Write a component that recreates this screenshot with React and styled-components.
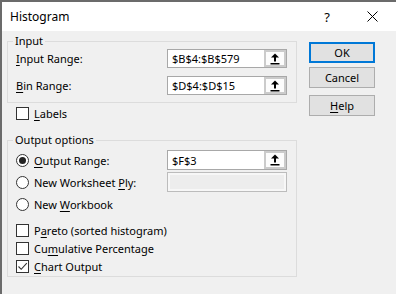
import React from 'react'
import styled, { createGlobalStyle } from 'styled-components'

const GlobalStyle = createGlobalStyle`
  html, body {
    margin: 0;
    padding: 0;
    background: #f0f0f0;
  }
  body {
    font-family: "Noto Sans", "Open Sans", sans-serif;
    font-size: 11px;
    color: #000;
  }
`

const Window = styled.div`
  width: 396px;
  height: 294px;
  box-sizing: border-box;
  border-top: 2px solid #6b6b6b;
  border-left: 2px solid #6b6b6b;
  background: #f0f0f0;
  display: flex;
  flex-direction: column;
  overflow: hidden;
`

const TitleBar = styled.div`
  height: 29px;
  flex: none;
  background: #fff;
  display: flex;
  align-items: center;
  padding: 0 9px 0 8px;
`

const Title = styled.div`
  flex: 1;
  font-size: 12px;
`

const TitleButtons = styled.div`
  display: flex;
  gap: 15px;
`

const TitleButton = styled.div`
  width: 30px;
  height: 20px;
  display: flex;
  align-items: center;
  justify-content: center;
  font-size: 13px;
`

const Body = styled.div`
  display: flex;
  padding: 3px 0 0 5px;
`

const LeftCol = styled.div`
  width: 290px;
  display: flex;
  flex-direction: column;
`

const Group = styled.fieldset`
  margin: ${p => p.$top || 0}px 0 0 0;
  padding: ${p => p.$pad || '1px 8px 7px 8px'};
  border: 1px solid #dcdcdc;
  min-width: 0;
  box-sizing: border-box;
  width: 290px;
`

const Legend = styled.legend`
  padding: 0 2px;
  margin-left: -3px;
  line-height: 14px;
  font-size: 11px;
`

const Rows = styled.div`
  display: flex;
  flex-direction: column;
  gap: ${p => p.$gap || 0}px;
  margin-top: ${p => p.$top || 0}px;
`

const FieldRow = styled.div`
  display: grid;
  grid-template-columns: 151px 120px;
  align-items: center;
  height: ${p => p.$h || 19}px;
`

const Field = styled.div`
  width: 120px;
  height: ${p => p.$h || 19}px;
  box-sizing: border-box;
  border: 1px solid ${p => (p.$disabled ? '#bcbcbc' : '#a8a8a8')};
  background: ${p => (p.$disabled ? '#ededed' : '#fff')};
  box-shadow: ${p => (p.$disabled ? 'inset 0 0 0 2px #f7f7f7' : 'none')};
  display: flex;
  align-items: center;
`

const FieldText = styled.span`
  flex: 1;
  padding-left: 4px;
  white-space: nowrap;
`

const PickButton = styled.div`
  width: 22px;
  height: 100%;
  box-sizing: border-box;
  border: 2px solid #cbcbcb;
  background: #fcfcfc;
  display: flex;
  align-items: center;
  justify-content: center;
`

const CheckRow = styled.label`
  display: flex;
  align-items: center;
  gap: 5px;
  height: ${p => p.$h || 18}px;
  padding-left: ${p => p.$indent || 0}px;
  margin-top: ${p => p.$top || 0}px;
  white-space: nowrap;
`

const Box = styled.span`
  width: 13px;
  height: 13px;
  box-sizing: border-box;
  border: 1px solid #333;
  background: #fff;
  flex: none;
  display: flex;
  align-items: center;
  justify-content: center;
`

const Radio = styled.span`
  width: 13px;
  height: 13px;
  box-sizing: border-box;
  border: 1px solid #333;
  border-radius: 50%;
  background: #fff;
  flex: none;
  display: flex;
  align-items: center;
  justify-content: center;

  &::after {
    content: '';
    width: 7px;
    height: 7px;
    border-radius: 50%;
    background: ${p => (p.$on ? '#222' : 'transparent')};
  }
`

const RightCol = styled.div`
  margin-left: 12px;
  display: flex;
  flex-direction: column;
  padding-top: 8px;
`

const Button = styled.div`
  width: 66px;
  height: 21px;
  box-sizing: border-box;
  margin-top: ${p => p.$top || 0}px;
  background: #e1e1e1;
  border: 1px solid ${p => (p.$primary ? '#0078d7' : '#adadad')};
  box-shadow: ${p => (p.$primary ? 'inset 0 0 0 1px #0078d7' : 'none')};
  display: flex;
  align-items: center;
  justify-content: center;
`

const U = styled.span`
  text-decoration: underline;
  text-underline-offset: 2px;
`

const UpArrow = () => (
  <svg width="10" height="12" viewBox="0 0 10 12">
    <polygon points="5,0.5 9,4.5 6,4.5 6,8.5 4,8.5 4,4.5 1,4.5" fill="#000" />
    <rect x="0.5" y="10" width="9" height="1.5" fill="#000" />
  </svg>
)

const CloseIcon = () => (
  <svg width="11" height="11" viewBox="0 0 11 11">
    <path d="M0.5 0.5 L10.5 10.5 M10.5 0.5 L0.5 10.5" stroke="#000" strokeWidth="1" />
  </svg>
)

const Tick = () => (
  <svg width="11" height="11" viewBox="0 0 11 11">
    <path d="M1.5 5.5 L4.2 8.3 L9.8 2.2" stroke="#333" strokeWidth="1.1" fill="none" />
  </svg>
)

const RangeField = ({value, disabled, h}) =>
  <Field $disabled={disabled} $h={h}>
    <FieldText>{value}</FieldText>
    {!disabled && <PickButton><UpArrow/></PickButton>}
  </Field>

const App = () =>
  <Window>
    <GlobalStyle/>
    <TitleBar>
      <Title>Histogram</Title>
      <TitleButtons>
        <TitleButton>?</TitleButton>
        <TitleButton><CloseIcon/></TitleButton>
      </TitleButtons>
    </TitleBar>
    <Body>
      <LeftCol>
        <Group>
          <Legend>Input</Legend>
          <Rows $gap={8}>
            <FieldRow>
              <span><U>I</U>nput Range:</span>
              <RangeField value='$B$4:$B$579'/>
            </FieldRow>
            <FieldRow>
              <span><U>B</U>in Range:</span>
              <RangeField value='$D$4:$D$15'/>
            </FieldRow>
          </Rows>
        </Group>
        <CheckRow $h={14} $indent={9} $top={3}>
          <Box/>
          <span><U>L</U>abels</span>
        </CheckRow>
        <Group $top={13} $pad='3px 8px 1px 8px'>
          <Legend>Output options</Legend>
          <Rows $gap={2}>
            <FieldRow $h={20}>
              <CheckRow $h={20}>
                <Radio $on/>
                <span><U>O</U>utput Range:</span>
              </CheckRow>
              <RangeField value='$F$3' h={20}/>
            </FieldRow>
            <FieldRow $h={20}>
              <CheckRow $h={20}>
                <Radio/>
                <span>New Worksheet <U>P</U>ly:</span>
              </CheckRow>
              <RangeField disabled h={20}/>
            </FieldRow>
            <CheckRow $h={20}>
              <Radio/>
              <span>New <U>W</U>orkbook</span>
            </CheckRow>
          </Rows>
          <Rows $top={7}>
            <CheckRow>
              <Box/>
              <span>P<U>a</U>reto (sorted histogram)</span>
            </CheckRow>
            <CheckRow>
              <Box/>
              <span>Cu<U>m</U>ulative Percentage</span>
            </CheckRow>
            <CheckRow>
              <Box><Tick/></Box>
              <span><U>C</U>hart Output</span>
            </CheckRow>
          </Rows>
        </Group>
      </LeftCol>
      <RightCol>
        <Button $primary>OK</Button>
        <Button $top={4}>Cancel</Button>
        <Button $top={7}><span><U>H</U>elp</span></Button>
      </RightCol>
    </Body>
  </Window>

export default App
